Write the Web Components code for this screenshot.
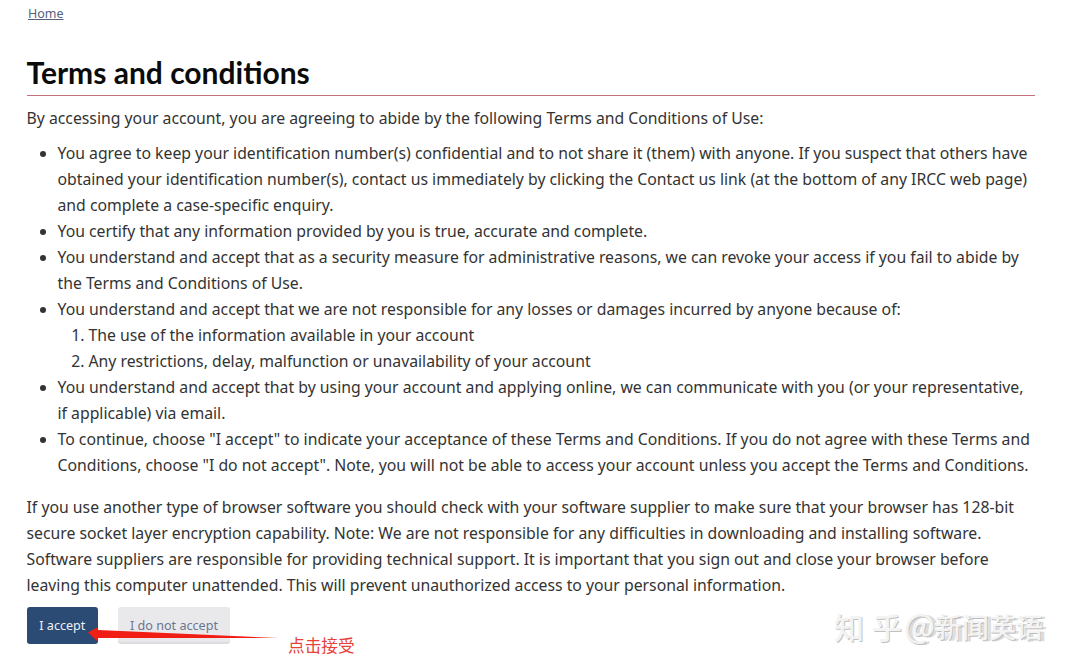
<!DOCTYPE html>
<html lang="en"><head><meta charset="utf-8"><style>
html,body{margin:0;background:#fff}
body{width:1080px;height:669px;overflow:hidden;position:relative}
ol{padding-left:31px}
</style></head><body>
<terms-page>
<a slot="crumb" href="#">Home</a>
<span slot="title">Terms and conditions</span>
<p>By accessing your account, you are agreeing to abide by the following Terms and Conditions of Use:</p>
<ul>
<li>You agree to keep your identification number(s) confidential and to not share it (them) with anyone. If you suspect that others have obtained your identification number(s), contact us immediately by clicking the Contact us link (at the bottom of any IRCC web page) and complete a case-specific enquiry.</li>
<li>You certify that any information provided by you is true, accurate and complete.</li>
<li>You understand and accept that as a security measure for administrative reasons, we can revoke your access if you fail to abide by the Terms and Conditions of Use.</li>
<li>You understand and accept that we are not responsible for any losses or damages incurred by anyone because of:
<ol><li>The use of the information available in your account</li><li>Any restrictions, delay, malfunction or unavailability of your account</li></ol></li>
<li>You understand and accept that by using your account and applying online, we can communicate with you (or your representative, if applicable) via email.</li>
<li>To continue, choose "I accept" to indicate your acceptance of these Terms and Conditions. If you do not agree with these Terms and Conditions, choose "I do not accept". Note, you will not be able to access your account unless you accept the Terms and Conditions.</li>
</ul>
<p>If you use another type of browser software you should check with your software supplier to make sure that your browser has 128-bit secure socket layer encryption capability. Note: We are not responsible for any difficulties in downloading and installing software. Software suppliers are responsible for providing technical support. It is important that you sign out and close your browser before leaving this computer unattended. This will prevent unauthorized access to your personal information.</p>
<ui-button slot="actions" kind="primary">I accept</ui-button>
<ui-button slot="actions">I do not accept</ui-button>
</terms-page>
<red-note></red-note>
<zh-mark></zh-mark>
<script>
function def(name, html){
  customElements.define(name, class extends HTMLElement{
    constructor(){super();this.attachShadow({mode:'open'}).innerHTML=html;}
  });
}
def('terms-page', `<style>
:host{display:block;box-sizing:border-box;width:1080px;height:669px;padding:5px 45px 0 26.500px;font:15.79px/26px "Noto Sans",sans-serif;color:#333}
.crumb{height:18px;font-size:12.5px;line-height:18px;padding-left:1.500px}
::slotted(a){color:#56607f;text-decoration:underline}
h1{margin:30px 0 0;font:700 30px/39px Lato,sans-serif;color:#0b0b0b;border-bottom:1px solid #c4707a;padding-bottom:3px}
.body{padding-top:9px}
::slotted(p){margin:0 0 9px}
::slotted(ul){margin:0 0 16px;padding:0 0 0 31px}
.actions{display:flex;gap:20px;margin-top:9px;padding-left:.500px}
</style>
<div class="crumb"><slot name="crumb"></slot></div>
<h1><slot name="title"></slot></h1>
<div class="body"><slot></slot></div>
<div class="actions"><slot name="actions"></slot></div>`);
def('ui-button', `<style>
:host{display:block;box-sizing:border-box;height:37px;padding:0 12.300px;border-radius:3px;background:#e9e9ec;color:#6b7590;border-bottom:2px solid #dcdce0;font:12.600px/38px "Noto Sans",sans-serif}
:host([kind=primary]){background:#2b4a74;color:#eef1f6;border-bottom-color:#2b4a74}
</style><slot></slot>`);
def('red-note', `<style>
:host{position:absolute;left:0;top:0;width:1080px;height:669px;pointer-events:none;display:block}
svg{position:absolute;left:0;top:0}
span{position:absolute;left:288px;top:635px;font:16.700px/20px "Noto Sans CJK SC",sans-serif;color:#e8413a}
</style>
<svg width="1080" height="669"><path d="M88 632.500 L97 627.500 L98 630 L278 638 L98 638 L97 641Z" fill="#f01e14"/></svg>
<span>点击接受</span>`);
def('zh-mark', `<style>
:host{position:absolute;left:834px;top:602px;display:flex;align-items:center;white-space:nowrap;font:500 30px/44px "Noto Sans CJK SC",sans-serif;color:#f3f3f3;text-shadow:1px 1px 0 #c2c2c2,-1px -1px 0 #fff}
.z{margin-left:8px}
.h{margin-left:2px;font-size:27px;text-shadow:1px 1px 0 #bdbdbd,4px 1px 0 #dcdcdc,-1px -1px 0 #fff}
.at{font-size:32px}
</style><span>知</span><span class="z">乎</span><span class="h"><span class="at">@</span>新闻英语</span>`);
</script>
</body></html>
